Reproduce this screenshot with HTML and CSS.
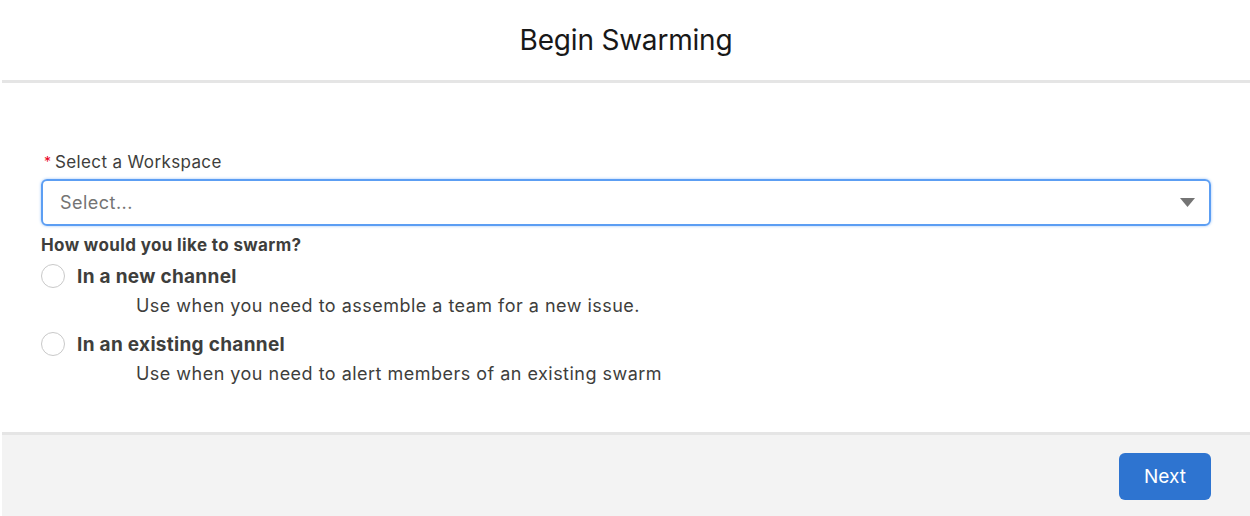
FILE: index.html
```html
<!DOCTYPE html>
<html lang="en">
<head>
<meta charset="utf-8">
<title>Begin Swarming</title>
<link rel="stylesheet" href="styles.css">
</head>
<body>
<div class="modal">
  <header class="modal-header">
    <h1 class="modal-title">Begin Swarming</h1>
  </header>
  <main class="modal-body">
    <label class="field-label"><abbr class="required">*</abbr>Select a Workspace</label>
    <div class="select">
      <span class="placeholder">Select...</span>
      <svg class="caret" width="15" height="9" viewBox="0 0 15 9"><path d="M0 0H15L7.5 9Z" fill="#747474"/></svg>
    </div>
    <div class="question">How would you like to swarm?</div>
    <div class="option">
      <span class="radio"></span>
      <span class="option-label">In a new channel</span>
    </div>
    <div class="option-desc">Use when you need to assemble a team for a new issue.</div>
    <div class="option option-2">
      <span class="radio"></span>
      <span class="option-label">In an existing channel</span>
    </div>
    <div class="option-desc">Use when you need to alert members of an existing swarm</div>
  </main>
  <footer class="modal-footer">
    <button class="btn-next">Next</button>
  </footer>
</div>
</body>
</html>
```
FILE: styles.css
```css
*, *::before, *::after {
  box-sizing: border-box;
}
html, body {
  margin: 0;
  padding: 0;
  background: #ffffff;
}
body {
  font-family: "Inter", "Liberation Sans", sans-serif;
  color: #3e3e3c;
}
.modal {
  margin-left: 2px;
  width: 1248px;
  height: 516px;
  display: flex;
  flex-direction: column;
}
.modal-header {
  height: 83px;
  flex: none;
  border-bottom: 3px solid #e5e5e5;
  display: flex;
  align-items: center;
  justify-content: center;
}
.modal-title {
  margin: 0;
  font-size: 28px;
  font-weight: 400;
  color: #181818;
  letter-spacing: -0.2px;
}
.modal-body {
  flex: 1;
  padding: 68px 39px 0 39px;
  display: flex;
  flex-direction: column;
}
.field-label {
  font-size: 17px;
  letter-spacing: 0.37px;
  line-height: 22px;
  color: #3e3e3c;
  display: flex;
  align-items: center;
}
.required {
  color: #ea001e;
  text-decoration: none;
  font-size: 14px;
  letter-spacing: 0;
  margin: 0 4px 0 3px;
}
.select {
  margin-top: 6px;
  height: 47px;
  flex: none;
  border: 2px solid #5c9ef3;
  border-radius: 6px;
  box-shadow: 0 0 3px #9cc4f8;
  display: flex;
  align-items: center;
  justify-content: space-between;
  padding: 0 14px 0 17px;
}
.placeholder {
  font-size: 18px;
  letter-spacing: 0.47px;
  color: #747474;
}
.question {
  margin-top: 8px;
  font-size: 17px;
  letter-spacing: 0.37px;
  line-height: 22px;
  font-weight: 700;
  color: #3e3e3c;
}
.option {
  margin-top: 7px;
  height: 26px;
  flex: none;
  display: flex;
  align-items: center;
}
.option-2 {
  margin-top: 13px;
}
.radio {
  width: 24px;
  height: 24px;
  border: 1.5px solid #c9c9c9;
  border-radius: 50%;
  background: #ffffff;
  margin-right: 12px;
}
.option-label {
  font-size: 19px;
  letter-spacing: 0.3px;
  font-weight: 700;
  color: #3e3e3c;
}
.option-desc {
  margin-top: 5px;
  padding-left: 95px;
  font-size: 18px;
  letter-spacing: 0.48px;
  line-height: 24px;
  color: #3e3e3c;
}
.option-desc:last-child {
  margin-top: 5px;
}
.modal-footer {
  height: 84px;
  flex: none;
  border-top: 3px solid #e5e5e5;
  background: #f3f3f3;
  display: flex;
  justify-content: flex-end;
  align-items: flex-start;
  padding: 18px 39px 0 0;
}
.btn-next {
  width: 92px;
  height: 47px;
  border: none;
  border-radius: 6px;
  background: #2e74d0;
  color: #ffffff;
  font-family: "Inter", "Liberation Sans", sans-serif;
  font-size: 19px;
}
```
